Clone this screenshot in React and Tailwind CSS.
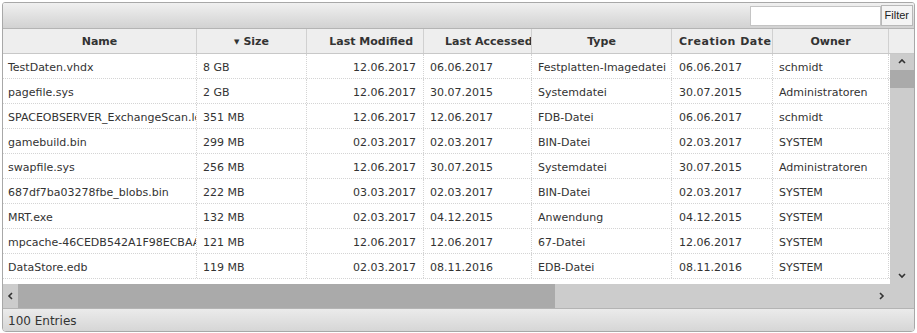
const cols = [
  { label: 'Name', w: 'w-[194px]', head: 'justify-center', cell: 'text-left pl-[5px]' },
  { label: 'Size', w: 'w-[110px]', head: 'justify-center', cell: 'text-left pl-[6px]', sort: true },
  { label: 'Last Modified', w: 'w-[117px]', head: 'justify-end pr-[10px]', cell: 'text-right pr-[7px]' },
  { label: 'Last Accessed', w: 'w-[108px]', head: 'justify-start pl-[21px]', cell: 'text-left pl-[6px]' },
  { label: 'Type', w: 'w-[140px]', head: 'justify-center', cell: 'text-left pl-[6px]' },
  { label: 'Creation Date', w: 'w-[101px]', head: 'justify-start pl-[7px] tracking-[0.5px]', cell: 'text-left pl-[7px]' },
  { label: 'Owner', w: 'w-[116px]', head: 'justify-center', cell: 'text-left pl-[6px]' },
]

const rows = [
  ['TestDaten.vhdx', '8 GB', '12.06.2017', '06.06.2017', 'Festplatten-Imagedatei', '06.06.2017', 'schmidt'],
  ['pagefile.sys', '2 GB', '12.06.2017', '30.07.2015', 'Systemdatei', '30.07.2015', 'Administratoren'],
  ['SPACEOBSERVER_ExchangeScan.log', '351 MB', '12.06.2017', '12.06.2017', 'FDB-Datei', '06.06.2017', 'schmidt'],
  ['gamebuild.bin', '299 MB', '02.03.2017', '02.03.2017', 'BIN-Datei', '02.03.2017', 'SYSTEM'],
  ['swapfile.sys', '256 MB', '12.06.2017', '30.07.2015', 'Systemdatei', '30.07.2015', 'Administratoren'],
  ['687df7ba03278fbe_blobs.bin', '222 MB', '03.03.2017', '02.03.2017', 'BIN-Datei', '02.03.2017', 'SYSTEM'],
  ['MRT.exe', '132 MB', '02.03.2017', '04.12.2015', 'Anwendung', '04.12.2015', 'SYSTEM'],
  ['mpcache-46CEDB542A1F98ECBAA0.67', '121 MB', '12.06.2017', '12.06.2017', '67-Datei', '12.06.2017', 'SYSTEM'],
  ['DataStore.edb', '119 MB', '02.03.2017', '08.11.2016', 'EDB-Datei', '08.11.2016', 'SYSTEM'],
]

const Chevron = ({ dir }) => {
  const d = {
    up: 'M1 5 L4 2 L7 5',
    down: 'M1 2 L4 5 L7 2',
    left: 'M5 1 L2 4 L5 7',
    right: 'M2 1 L5 4 L2 7',
  }[dir]
  return (
    <svg width="8" height="8" viewBox="0 0 8 8" className="block">
      <path d={d} fill="none" stroke="#333" strokeWidth="1.6" />
    </svg>
  )
}

const App = () => {
  return (
    <div className="w-[917px] h-[333px] bg-white pl-[2px] pt-[2px] font-['DejaVu_Sans',Verdana,sans-serif] text-[11px] text-[#333]">
      <div className="w-[913px] h-[330px] border border-[#a8a8a8] rounded-b-[4px] rounded-t-[3px] overflow-hidden flex flex-col">
        {/* toolbar */}
        <div className="h-[26px] shrink-0 bg-gradient-to-b from-[#f0f0f0] to-[#d2d2d2] border-b border-[#b4b4b4] flex items-center justify-end pr-[1px]">
          <input className="w-[131px] h-[20px] bg-white border border-[#c4c4c4] outline-none" />
          <button className="h-[21px] px-[3px] bg-[#f4f4f4] border border-[#b8b8b8] font-['Liberation_Sans',Arial,sans-serif] text-[11px] text-[#222]">
            Filter
          </button>
        </div>

        {/* header */}
        <div className="h-[25px] shrink-0 flex bg-[#eeeeee] border-b border-[#c8c8c8]">
          {cols.map((c) => (
            <div
              key={c.label}
              className={`${c.w} shrink-0 flex items-center pt-[3px] overflow-hidden whitespace-nowrap border-r border-[#d0d0d0] font-bold ${c.head}`}
            >
              {c.sort && <span className="text-[7px] mr-[4px] mt-[-1px]">▼</span>}
              {c.label}
            </div>
          ))}
          <div className="flex-1" />
        </div>

        {/* body */}
        <div className="h-[230px] shrink-0 flex">
          <div className="flex-1 bg-white overflow-hidden">
            {rows.map((r, i) => (
              <div key={i} className="h-[25px] flex border-b border-dotted border-[#d4d4d4]">
                {r.map((v, j) => (
                  <div
                    key={j}
                    className={`${cols[j].w} shrink-0 pt-[4px] leading-[20px] overflow-hidden whitespace-nowrap border-r border-dotted border-[#d4d4d4] ${cols[j].cell}`}
                  >
                    {v}
                  </div>
                ))}
              </div>
            ))}
          </div>
          <div className="w-[24px] shrink-0 bg-[#cccccc] flex flex-col">
            <div className="h-[16px] flex items-center justify-center">
              <Chevron dir="up" />
            </div>
            <div className="h-[18px] bg-[#aaaaaa]" />
            <div className="flex-1" />
            <div className="h-[16px] flex items-center justify-center">
              <Chevron dir="down" />
            </div>
          </div>
        </div>

        {/* horizontal scroll */}
        <div className="h-[24px] shrink-0 bg-[#cccccc] flex items-center">
          <div className="w-[15px] h-full flex items-center justify-center">
            <Chevron dir="left" />
          </div>
          <div className="w-[537px] h-full bg-[#aaaaaa]" />
          <div className="flex-1" />
          <div className="w-[16px] h-full flex items-center justify-center mr-[24px]">
            <Chevron dir="right" />
          </div>
        </div>

        {/* footer */}
        <div className="flex-1 bg-gradient-to-b from-[#ebebeb] to-[#d6d6d6] border-t border-[#b4b4b4] flex items-center pl-[5px] pt-[2px] text-[12px]">
          100 Entries
        </div>
      </div>
    </div>
  )
}

export default App
